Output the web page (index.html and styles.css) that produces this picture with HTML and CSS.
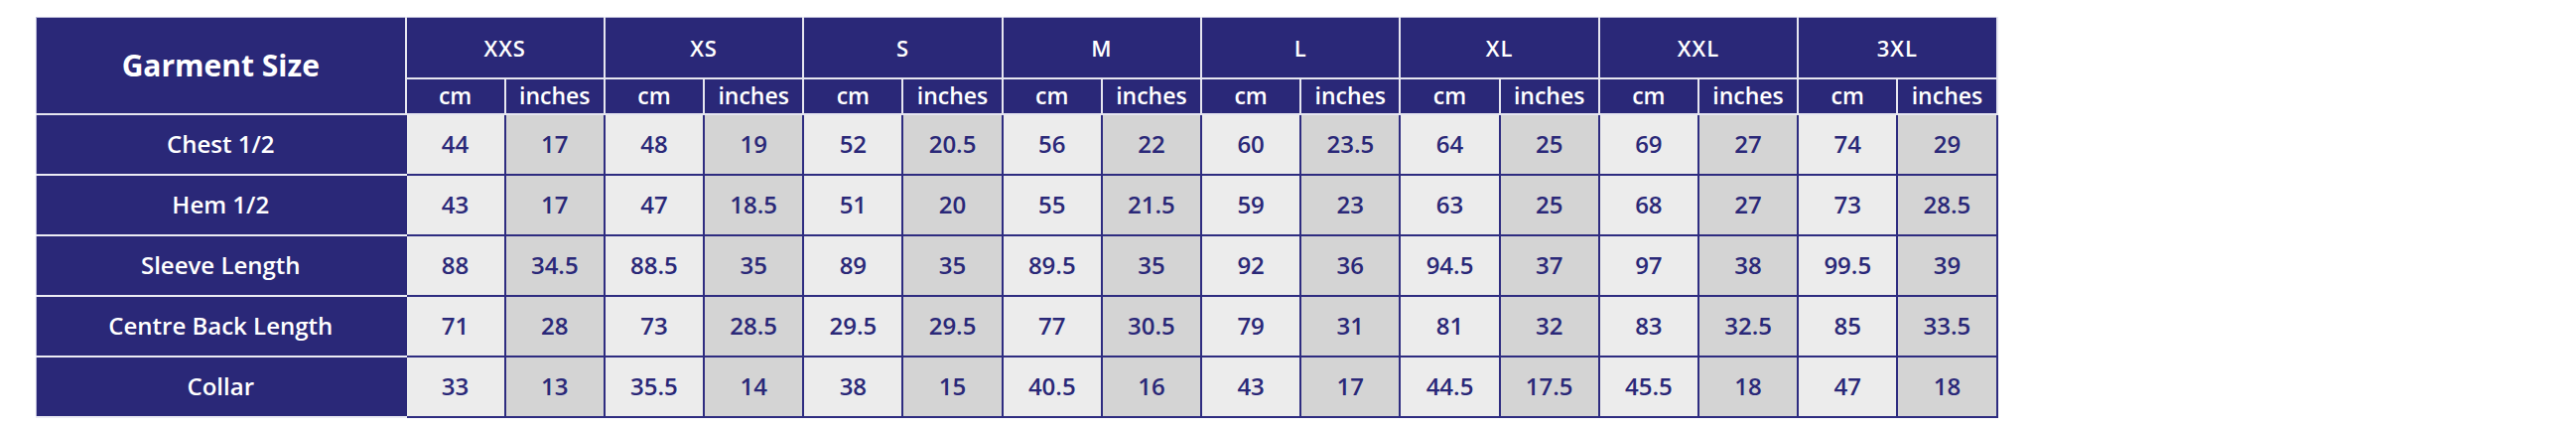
FILE: index.html
```html
<!DOCTYPE html>
<html lang="en">
<head>
<meta charset="utf-8">
<title>Size Chart</title>
<link rel="stylesheet" href="styles.css">
</head>
<body>
<table class="size-chart">
  <colgroup>
    <col class="col-label">
    <col class="col-val"><col class="col-val"><col class="col-val"><col class="col-val">
    <col class="col-val"><col class="col-val"><col class="col-val"><col class="col-val">
    <col class="col-val"><col class="col-val"><col class="col-val"><col class="col-val">
    <col class="col-val"><col class="col-val"><col class="col-val"><col class="col-val">
  </colgroup>
  <thead>
    <tr class="row-size">
      <th class="title" rowspan="2">Garment Size</th>
      <th colspan="2">XXS</th>
      <th colspan="2">XS</th>
      <th colspan="2">S</th>
      <th colspan="2">M</th>
      <th colspan="2">L</th>
      <th colspan="2">XL</th>
      <th colspan="2">XXL</th>
      <th colspan="2">3XL</th>
    </tr>
    <tr class="row-unit">
      <th>cm</th><th>inches</th>
      <th>cm</th><th>inches</th>
      <th>cm</th><th>inches</th>
      <th>cm</th><th>inches</th>
      <th>cm</th><th>inches</th>
      <th>cm</th><th>inches</th>
      <th>cm</th><th>inches</th>
      <th>cm</th><th>inches</th>
    </tr>
  </thead>
  <tbody>
    <tr>
      <th class="label">Chest 1/2</th>
      <td class="cm">44</td><td class="in">17</td>
      <td class="cm">48</td><td class="in">19</td>
      <td class="cm">52</td><td class="in">20.5</td>
      <td class="cm">56</td><td class="in">22</td>
      <td class="cm">60</td><td class="in">23.5</td>
      <td class="cm">64</td><td class="in">25</td>
      <td class="cm">69</td><td class="in">27</td>
      <td class="cm">74</td><td class="in">29</td>
    </tr>
    <tr>
      <th class="label">Hem 1/2</th>
      <td class="cm">43</td><td class="in">17</td>
      <td class="cm">47</td><td class="in">18.5</td>
      <td class="cm">51</td><td class="in">20</td>
      <td class="cm">55</td><td class="in">21.5</td>
      <td class="cm">59</td><td class="in">23</td>
      <td class="cm">63</td><td class="in">25</td>
      <td class="cm">68</td><td class="in">27</td>
      <td class="cm">73</td><td class="in">28.5</td>
    </tr>
    <tr>
      <th class="label">Sleeve Length</th>
      <td class="cm">88</td><td class="in">34.5</td>
      <td class="cm">88.5</td><td class="in">35</td>
      <td class="cm">89</td><td class="in">35</td>
      <td class="cm">89.5</td><td class="in">35</td>
      <td class="cm">92</td><td class="in">36</td>
      <td class="cm">94.5</td><td class="in">37</td>
      <td class="cm">97</td><td class="in">38</td>
      <td class="cm">99.5</td><td class="in">39</td>
    </tr>
    <tr>
      <th class="label">Centre Back Length</th>
      <td class="cm">71</td><td class="in">28</td>
      <td class="cm">73</td><td class="in">28.5</td>
      <td class="cm">29.5</td><td class="in">29.5</td>
      <td class="cm">77</td><td class="in">30.5</td>
      <td class="cm">79</td><td class="in">31</td>
      <td class="cm">81</td><td class="in">32</td>
      <td class="cm">83</td><td class="in">32.5</td>
      <td class="cm">85</td><td class="in">33.5</td>
    </tr>
    <tr>
      <th class="label">Collar</th>
      <td class="cm">33</td><td class="in">13</td>
      <td class="cm">35.5</td><td class="in">14</td>
      <td class="cm">38</td><td class="in">15</td>
      <td class="cm">40.5</td><td class="in">16</td>
      <td class="cm">43</td><td class="in">17</td>
      <td class="cm">44.5</td><td class="in">17.5</td>
      <td class="cm">45.5</td><td class="in">18</td>
      <td class="cm">47</td><td class="in">18</td>
    </tr>
  </tbody>
</table>
</body>
</html>
```

FILE: styles.css
```css
html, body {
  margin: 0;
  padding: 0;
  background: #ffffff;
}

body {
  padding: 17px 0 0 36px;
  font-family: "Open Sans", "Lato", "Liberation Sans", sans-serif;
}

.size-chart {
  table-layout: fixed;
  border-collapse: collapse;
  width: 1975px;
  color: #2a2878;
}

.col-label { width: 372px; }
.col-val { width: 100.19px; }

.size-chart th,
.size-chart td {
  padding: 0;
  text-align: center;
  vertical-align: middle;
  line-height: 1.2;
}

thead th {
  background: #2a2878;
  color: #ffffff;
  font-weight: 600;
  border: 2px solid #e6e6f0;
  border-top: 1px solid #b8b8d6;
}

.row-size th {
  height: 60px;
  font-size: 22px;
  font-weight: 600;
  letter-spacing: 1px;
}

.row-unit th {
  height: 34px;
  font-size: 23px;
  letter-spacing: 0;
  border-top: 2px solid #e6e6f0;
}

thead th.title {
  font-size: 30px;
  font-weight: 700;
  letter-spacing: 0;
  border-left: 1px solid #b8b8d6;
}

tbody th.label {
  background: #2a2878;
  color: #ffffff;
  font-size: 24px;
  font-weight: 600;
  height: 59px;
  border-top: 2px solid #ececf4;
  border-bottom: 2px solid #ececf4;
  border-left: 1px solid #b8b8d6;
  border-right: 2px solid #2a2878;
}

tbody td {
  font-size: 24px;
  font-weight: 600;
  border: 2px solid #2e2c80;
}

tbody td.cm { background: #ececec; }
tbody td.in { background: #d4d4d4; }
```
